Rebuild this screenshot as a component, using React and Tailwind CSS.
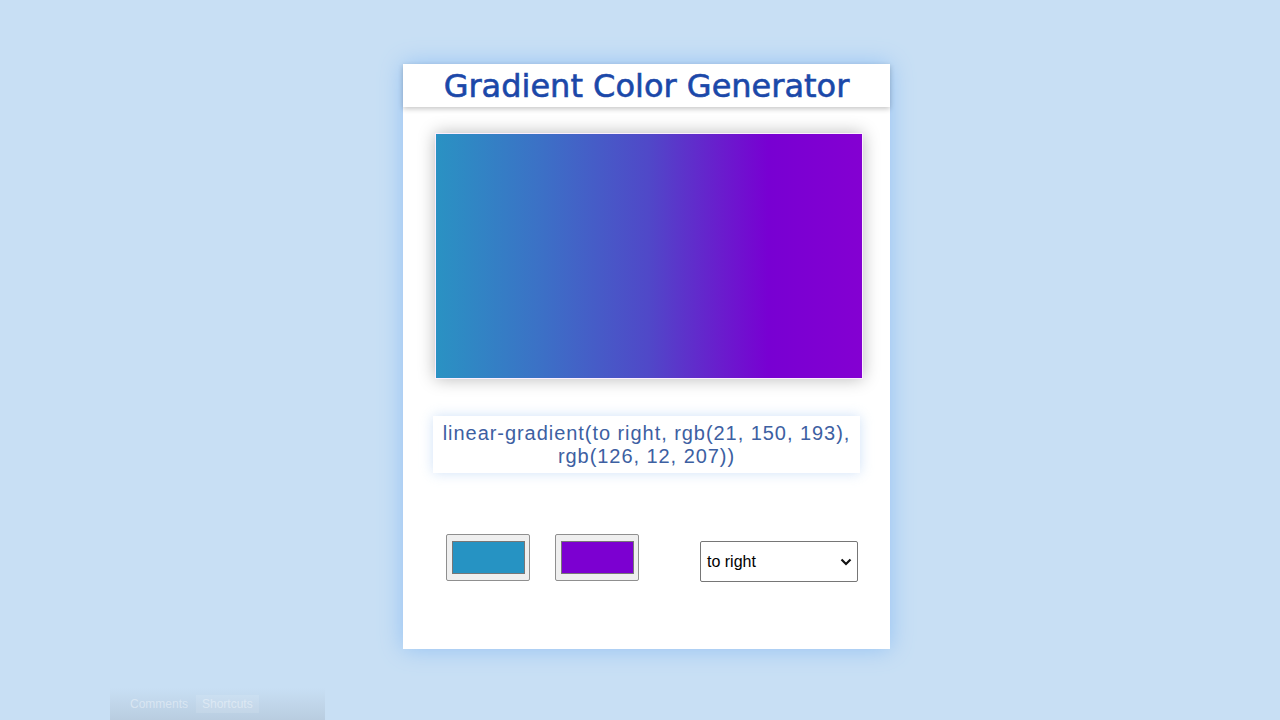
// Gradient generator card: preview, CSS string, two colour pickers and a direction select.
const from = "rgb(21, 150, 193)";
const to = "rgb(126, 12, 207)";

function Swatch({ color }) {
  return (
    <div className="w-[84px] h-[47px] bg-[#efefef] border border-[#8f8f8f] rounded-[2px] pl-[5px] pr-[4px] py-[6px] flex">
      <div className="flex-1 border border-[#777]" style={{ background: color }} />
    </div>
  );
}

export default function App() {
  return (
    <div className="relative min-h-[720px] w-full bg-[#c8dff4] overflow-hidden font-['Liberation_Sans',Arial,sans-serif]">
      <div className="pt-[64px] flex justify-center">
        <div className="w-[487px] h-[585px] bg-white shadow-[0_0_22px_#94c2f4] ml-[13px]">
          <div className="h-[43px] bg-white flex items-center justify-center shadow-[0_2px_5px_rgba(0,0,0,0.22)] relative">
            <h1 className="text-[32px] text-[#1b48a9] font-['DejaVu_Sans',Verdana,sans-serif] [-webkit-text-stroke:0.6px_#1b48a9] leading-none">
              Gradient Color Generator
            </h1>
          </div>

          <div className="px-[32px] pt-[26px]">
            <div className="w-[428px] h-[246px] border border-[#fbeefe] shadow-[0_0_16px_rgba(0,0,0,0.28)] bg-[linear-gradient(to_right,#2a92c3_0%,#3c70c6_25%,#5048c8_50%,#6a1ccd_67%,#7800d2_78%,#8400d2_100%)]" />

            <div className="mt-[37px] w-[427px] h-[57px] -ml-[2px] bg-white shadow-[0_0_12px_rgba(150,190,240,0.45)] flex items-center justify-center text-center text-[20px] leading-[23px] text-[#3d60a2] tracking-[0.95px]">
              <p>
                linear-gradient(to right, {from},
                <br />
                {to})
              </p>
            </div>

            <div className="mt-[61px] flex items-start">
              <div className="ml-[11px] flex gap-[25px]">
                <Swatch color="#2693c3" />
                <Swatch color="#7c00d1" />
              </div>
              <div className="ml-auto mt-[7px] w-[158px] h-[41px] border border-[#767676] rounded-[2px] bg-white pl-[6px] pr-[5px] flex items-center justify-between text-[16px] text-black">
                <span>to right</span>
                <svg width="12" height="10" viewBox="0 0 12 10" fill="none">
                  <path d="M1.5 2.5 L6 7 L10.5 2.5" stroke="#111" strokeWidth="2.2" />
                </svg>
              </div>
            </div>
          </div>
        </div>
      </div>

      <div className="absolute left-[110px] bottom-0 w-[215px] h-[32px] bg-gradient-to-b from-transparent to-[#b9cde0] flex items-center gap-[8px] pl-[20px] text-[12px] text-white/40">
        <span>Comments</span>
        <span className="px-[6px] bg-white/10">Shortcuts</span>
      </div>
    </div>
  );
}
